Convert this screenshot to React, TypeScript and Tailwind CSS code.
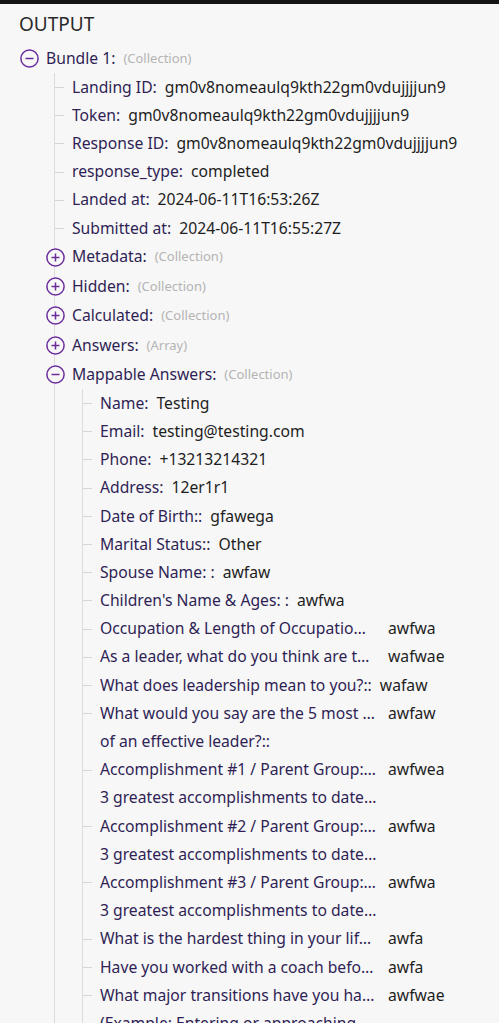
import type { ReactNode } from 'react'

type Leaf = { key: string[]; value?: string }

const bundleFields: Leaf[] = [
  { key: ['Landing ID:'], value: 'gm0v8nomeaulq9kth22gm0vdujjjjun9' },
  { key: ['Token:'], value: 'gm0v8nomeaulq9kth22gm0vdujjjjun9' },
  { key: ['Response ID:'], value: 'gm0v8nomeaulq9kth22gm0vdujjjjun9' },
  { key: ['response_type:'], value: 'completed' },
  { key: ['Landed at:'], value: '2024-06-11T16:53:26Z' },
  { key: ['Submitted at:'], value: '2024-06-11T16:55:27Z' },
]

const collapsed = [
  { label: 'Metadata:', type: '(Collection)' },
  { label: 'Hidden:', type: '(Collection)' },
  { label: 'Calculated:', type: '(Collection)' },
  { label: 'Answers:', type: '(Array)' },
]

// keys are shown already clipped, the way the source panel shows them
const answers: Leaf[] = [
  { key: ['Name:'], value: 'Testing' },
  { key: ['Email:'], value: 'testing@testing.com' },
  { key: ['Phone:'], value: '+13213214321' },
  { key: ['Address:'], value: '12er1r1' },
  { key: ['Date of Birth::'], value: 'gfawega' },
  { key: ['Marital Status::'], value: 'Other' },
  { key: ['Spouse Name: :'], value: 'awfaw' },
  { key: ["Children's Name & Ages: :"], value: 'awfwa' },
  { key: ['Occupation & Length of Occupatio…'], value: 'awfwa' },
  { key: ['As a leader, what do you think are t…'], value: 'wafwae' },
  { key: ['What does leadership mean to you?::'], value: 'wafaw' },
  { key: ['What would you say are the 5 most …', 'of an effective leader?::'], value: 'awfaw' },
  { key: ['Accomplishment #1 / Parent Group:…', '3 greatest accomplishments to date…'], value: 'awfwea' },
  { key: ['Accomplishment #2 / Parent Group:…', '3 greatest accomplishments to date…'], value: 'awfwa' },
  { key: ['Accomplishment #3 / Parent Group:…', '3 greatest accomplishments to date…'], value: 'awfwa' },
  { key: ['What is the hardest thing in your lif…'], value: 'awfa' },
  { key: ['Have you worked with a coach befo…'], value: 'awfa' },
  { key: ['What major transitions have you ha…', '(Example: Entering or approaching…'], value: 'awfwae' },
]

function ToggleIcon({ open }: { open: boolean }) {
  return (
    <svg width="19" height="19" viewBox="0 0 19 19" className="shrink-0 bg-[#f7f7f7]">
      <circle cx="9.5" cy="9.5" r="8.6" fill="none" stroke="#6b2c9b" strokeWidth="1.5" />
      <line x1="5.5" y1="9.5" x2="13.5" y2="9.5" stroke="#6b2c9b" strokeWidth="1.5" />
      {!open && <line x1="9.5" y1="5.5" x2="9.5" y2="13.5" stroke="#6b2c9b" strokeWidth="1.5" />}
    </svg>
  )
}

function CollectionRow({ label, type, open, children }: { label: string; type: string; open: boolean; children?: ReactNode }) {
  return (
    <div>
      <div className="flex h-[29.4px] items-center">
        <ToggleIcon open={open} />
        <span className="ml-[7px] text-[#2f1f55]">{label}</span>
        <span className="ml-[8px] text-[13px] text-[#b4b4b4]">{type}</span>
      </div>
      {children}
    </div>
  )
}

function LeafRow({ item }: { item: Leaf }) {
  const clipped = item.key.some((line) => line.endsWith('…'))
  return (
    <div className="flex items-start whitespace-nowrap">
      <div className="flex h-[28.2px] w-[17px] shrink-0 items-center">
        <div className="h-px w-[9px] bg-[#d6d6d6]" />
      </div>
      <div className={clipped ? 'flex w-[280px] shrink-0 flex-col' : 'flex shrink-0 flex-col'}>
        {item.key.map((line, i) => (
          <div key={i} className="flex h-[28.2px] items-center text-[#2f1f55]">
            {line}
          </div>
        ))}
      </div>
      {item.value && <div className="ml-2 flex h-[28.2px] items-center text-[#1e1e1e]">{item.value}</div>}
    </div>
  )
}

export default function App() {
  return (
    <div className="h-[1023px] overflow-hidden bg-[#f7f7f7] font-['Noto_Sans',sans-serif] text-[15.7px]">
      <div className="h-1 bg-[#141414]" />
      <div className="flex h-[40px] items-center px-[19px] text-[19px] text-[#2a2a2a]">OUTPUT</div>
      <div className="pl-[20px]">
        <CollectionRow label="Bundle 1:" type="(Collection)" open>
          <div className="ml-[34px] border-l border-[#dcdcdc]">
            {bundleFields.map((f) => (
              <LeafRow key={f.key[0]} item={f} />
            ))}
            <div className="-ml-[9px]">
              {collapsed.map((c) => (
                <CollectionRow key={c.label} label={c.label} type={c.type} open={false} />
              ))}
              <CollectionRow label="Mappable Answers:" type="(Collection)" open>
                <div className="ml-[36px] border-l border-[#dcdcdc]">
                  {answers.map((a) => (
                    <LeafRow key={a.key[0]} item={a} />
                  ))}
                </div>
              </CollectionRow>
            </div>
          </div>
        </CollectionRow>
      </div>
    </div>
  )
}
